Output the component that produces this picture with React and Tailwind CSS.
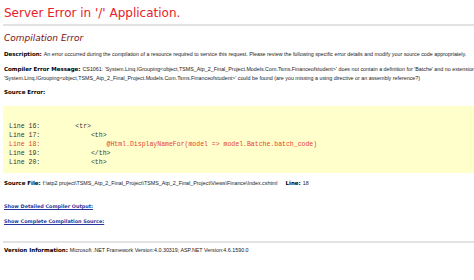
export default function App() {
  const label = "font-['DejaVu_Sans',Verdana,sans-serif] font-bold text-[5.5px] text-black";
  const codeLines = [
    { n: "Line 16:", code: "         <tr>" },
    { n: "Line 17:", code: "             <th>" },
    { n: "Line 18:", code: "                 @Html.DisplayNameFor(model => model.Batche.batch_code)", err: true },
    { n: "Line 19:", code: "             </th>" },
    { n: "Line 20:", code: "             <th>" },
  ];

  return (
    <div className="h-[280px] w-[474px] overflow-hidden bg-white font-['Liberation_Sans',Arial,sans-serif] text-[5.35px] leading-[9px] text-[#222]">
      <h1 className="ml-[4px] mt-[5px] whitespace-nowrap font-['DejaVu_Sans',Verdana,sans-serif] text-[12px] leading-[16px] text-[#e8202a]">
        Server Error in '/' Application.
      </h1>
      <div className="ml-[3px] mt-[3px] h-[2px] bg-[#e2e2e2]" />

      <h2 className="ml-[4px] mt-[6px] whitespace-nowrap font-['DejaVu_Sans',Verdana,sans-serif] text-[9px] italic leading-[12px] text-[#7a1010]">
        Compilation Error
      </h2>

      <div className="ml-[4px] mt-[6px] whitespace-nowrap">
        <span className={label}>Description: </span>
        An error occurred during the compilation of a resource required to service this request. Please review the following specific error details and modify your source code appropriately.
      </div>

      <div className="ml-[4px] mt-[6px] whitespace-nowrap">
        <div>
          <span className={label}>Compiler Error Message: </span>
          CS1061: 'System.Linq.IGrouping&lt;object,TSMS_Atp_2_Final_Project.Models.Com.Tsms.Financeofstudent&gt;' does not contain a definition for 'Batche' and no extension m
        </div>
        <div>
          'System.Linq.IGrouping&lt;object,TSMS_Atp_2_Final_Project.Models.Com.Tsms.Financeofstudent&gt;' could be found (are you missing a using directive or an assembly reference?)
        </div>
      </div>

      <div className={`ml-[4px] mt-[5px] leading-[9px] ${label}`}>Source Error:</div>

      <div className="ml-[3px] mt-[9px] h-[67px] bg-[#ffffcc] pl-[6px] pt-[7px]">
        <pre className="m-0 font-['Liberation_Mono','Courier_New',monospace] text-[6.5px] leading-[9px] text-[#333]">
          <div>&nbsp;</div>
          {codeLines.map((l) => (
            <div key={l.n} className={l.err ? "text-[#e4412f]" : ""}>
              {l.n}
              {l.code}
            </div>
          ))}
        </pre>
      </div>

      <div className="ml-[4px] mt-[6px] whitespace-nowrap">
        <span className={label}>Source File: </span>
        f:\atp2 project\TSMS_Atp_2_Final_Project\TSMS_Atp_2_Final_Project\Views\Finance\Index.cshtml
        <span className="inline-block w-[8px]" />
        <span className={label}>Line: </span>18
      </div>

      <div className="ml-[4px] mt-[14px] flex flex-col gap-[6px]">
        <a className="font-['DejaVu_Sans',Verdana,sans-serif] text-[4.9px] font-bold leading-[9px] text-[#26359a] underline">
          Show Detailed Compiler Output:
        </a>
        <a className="font-['DejaVu_Sans',Verdana,sans-serif] text-[4.9px] font-bold leading-[9px] text-[#26359a] underline">
          Show Complete Compilation Source:
        </a>
      </div>

      <div className="ml-[3px] mt-[15px] h-[2px] bg-[#e2e2e2]" />
      <div className="ml-[4px] mt-[3px] whitespace-nowrap">
        <span className={label}>Version Information: </span>
        Microsoft .NET Framework Version:4.0.30319; ASP.NET Version:4.6.1590.0
      </div>
    </div>
  );
}
